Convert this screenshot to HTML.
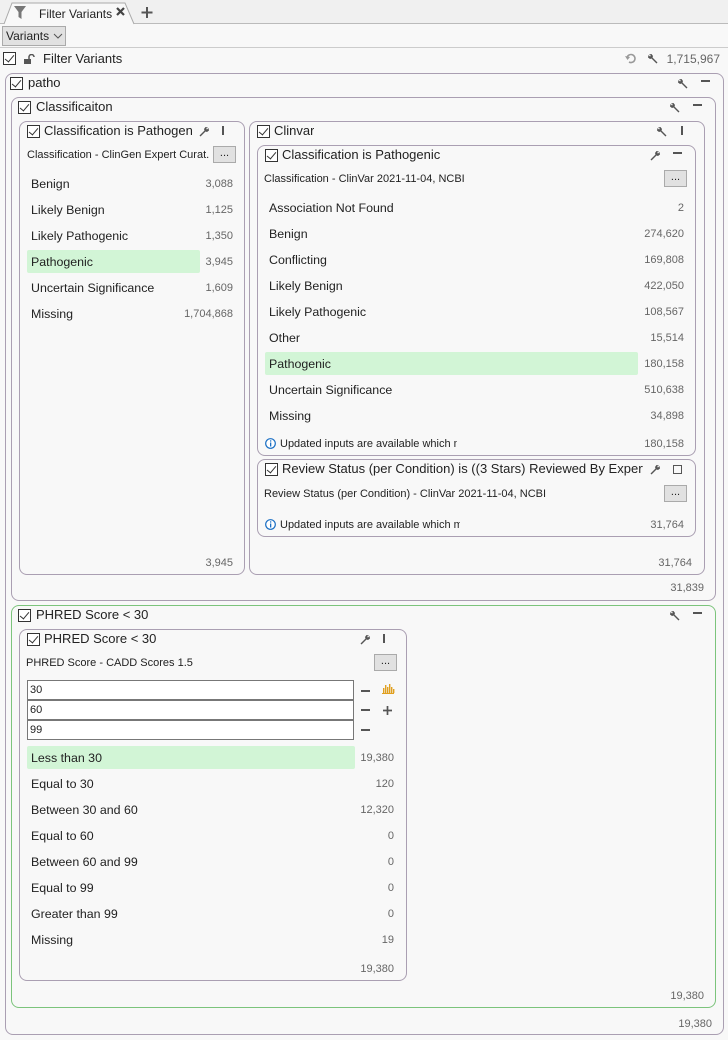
<!DOCTYPE html>
<html><head><meta charset="utf-8"><style>
*{box-sizing:border-box;margin:0;padding:0}
body{width:728px;height:1040px;background:#f8f8f8;font-family:"Liberation Sans",Tahoma,sans-serif;font-size:12.4px;color:#222;position:relative;overflow:hidden}
.a{position:absolute}
.box{position:absolute;border:1px solid #aa9fb2;border-radius:8px}
.t{position:absolute;height:16px;line-height:16px;white-space:nowrap;overflow:hidden}
.h{font-size:13px}
.c{position:absolute;height:16px;line-height:16px;font-size:11px;color:#666;text-align:right;white-space:nowrap}
.cb{position:absolute;width:13px;height:13px;border:1px solid #333;background:#fff}
.cb::after{content:"";position:absolute;left:3px;top:0px;width:4px;height:8px;border:solid #333;border-width:0 1.5px 1.5px 0;transform:rotate(40deg)}
.btn{position:absolute;width:23px;height:17px;border:1px solid #aaa;background:#e1e1e1;font-size:11px;text-align:center;line-height:13px;color:#222}
.hl{position:absolute;background:#d2f5d6;border-radius:2px}
.min{position:absolute;width:9px;height:2px;background:#555}
.bar{position:absolute;width:2px;height:9px;background:#555}
.inp{position:absolute;border:1px solid #777;background:#fff;height:20px;line-height:18px;padding-left:2px;font-size:11px}
.sm{font-size:11px}
</style></head><body>
<svg width="0" height="0" style="position:absolute"><defs>
<symbol id="w" viewBox="0 0 12 12"><path d="M2 1.5 L4.5 1 L6 3 L5.5 4.5 L10.5 9.5 L9.5 10.5 L4.5 5.5 L3 6 L1 4.5 L1.5 2 L3 3.5 L4 2.8 Z" fill="#555"/></symbol>
<symbol id="w2" viewBox="0 0 12 12"><path d="M10 1.5 L7.5 1 L6 3 L6.5 4.5 L1.5 9.5 L2.5 10.5 L7.5 5.5 L9 6 L11 4.5 L10.5 2 L9 3.5 L8 2.8 Z" fill="#555"/></symbol>
</defs></svg>

<div class="a" style="left:0;top:0;width:728px;height:24px;background:#f0f0f0;border-bottom:1px solid #bbb"></div>
<svg class="a" style="left:0;top:0" width="160" height="25"><path d="M4 24 L12 3 L125 3 L134 24" fill="#f8f8f8" stroke="#aaa"/><path d="M14 6 L26 6 L21.5 12 L21.5 19 L18.5 17 L18.5 12 Z" fill="#777"/><path d="M117 8 L124 15 M124 8 L117 15" stroke="#444" stroke-width="2.2"/><path d="M147 7 V18 M141.5 12.5 H152.5" stroke="#555" stroke-width="2"/></svg>
<div class="t" style="left:39px;top:6px;font-size:12px">Filter Variants</div>
<div class="a" style="left:2px;top:26px;width:64px;height:20px;background:#e1e1e1;border:1px solid #aaa"></div>
<div class="t" style="left:6px;top:28px;font-size:12px">Variants</div>
<svg class="a" style="left:53px;top:33px" width="10" height="6"><path d="M1 1 L5 5 L9 1" stroke="#555" fill="none"/></svg>
<div class="a" style="left:0;top:47px;width:728px;height:1px;background:#ccc"></div>

<div class="cb" style="left:3px;top:52px"></div>
<svg class="a" style="left:23px;top:54px" width="12" height="11"><rect x="1" y="5" width="7" height="5" fill="#555"/><path d="M6 5 V3 a2.5 2.5 0 0 1 5 0" stroke="#555" fill="none" stroke-width="1.5"/></svg>
<div class="t h" style="left:43px;top:51px">Filter Variants</div>
<svg class="a" style="left:624px;top:52px" width="13" height="13"><path d="M3 6 a4 4 0 1 1 2 4" stroke="#999" fill="none" stroke-width="1.6"/><path d="M1 4 L3.5 8 L6 5 Z" fill="#999"/></svg>
<svg class="a" style="left:647px;top:53px" width="12" height="12"><use href="#w"/></svg>
<div class="c" style="left:660px;top:51px;width:60px;font-size:12px">1,715,967</div>

<div class="box" style="left:5px;top:73px;width:719px;height:962px"></div>
<div class="cb" style="left:10px;top:77px"></div>
<div class="t h" style="left:28px;top:75px">patho</div>
<svg class="a" style="left:677px;top:78px" width="12" height="12"><use href="#w"/></svg>
<div class="min" style="left:701px;top:80px"></div>
<div class="c" style="left:640px;top:1016px;width:72px">19,380</div>

<div class="box" style="left:11px;top:97px;width:705px;height:504px"></div>
<div class="cb" style="left:18px;top:101px"></div>
<div class="t h" style="left:36px;top:99px">Classificaiton</div>
<svg class="a" style="left:669px;top:102px" width="12" height="12"><use href="#w"/></svg>
<div class="min" style="left:693px;top:104px"></div>
<div class="c" style="left:630px;top:580px;width:74px">31,839</div>

<div class="box" style="left:19px;top:121px;width:226px;height:454px"></div>
<div class="cb" style="left:27px;top:125px"></div>
<div class="t h" style="left:44px;top:123px;width:148px">Classification is Pathogeni</div>
<svg class="a" style="left:198px;top:126px" width="12" height="12"><use href="#w2"/></svg>
<div class="bar" style="left:222px;top:126px"></div>
<div class="t sm" style="left:27px;top:147px;width:183px">Classification - ClinGen Expert Curat...</div>
<div class="btn" style="left:213px;top:146px">...</div>
<div class="hl" style="left:27px;top:250px;width:173px;height:23px"></div>
<div class="t" style="left:31px;top:176px">Benign</div><div class="c" style="left:160px;top:176px;width:73px">3,088</div>
<div class="t" style="left:31px;top:202px">Likely Benign</div><div class="c" style="left:160px;top:202px;width:73px">1,125</div>
<div class="t" style="left:31px;top:228px">Likely Pathogenic</div><div class="c" style="left:160px;top:228px;width:73px">1,350</div>
<div class="t" style="left:31px;top:254px">Pathogenic</div><div class="c" style="left:160px;top:254px;width:73px">3,945</div>
<div class="t" style="left:31px;top:280px">Uncertain Significance</div><div class="c" style="left:160px;top:280px;width:73px">1,609</div>
<div class="t" style="left:31px;top:306px">Missing</div><div class="c" style="left:160px;top:306px;width:73px">1,704,868</div>
<div class="c" style="left:160px;top:555px;width:73px">3,945</div>

<div class="box" style="left:249px;top:121px;width:456px;height:454px"></div>
<div class="cb" style="left:257px;top:125px"></div>
<div class="t h" style="left:274px;top:123px">Clinvar</div>
<svg class="a" style="left:656px;top:126px" width="12" height="12"><use href="#w"/></svg>
<div class="bar" style="left:681px;top:126px"></div>
<div class="c" style="left:620px;top:555px;width:72px">31,764</div>

<div class="box" style="left:257px;top:145px;width:439px;height:311px"></div>
<div class="cb" style="left:265px;top:149px"></div>
<div class="t h" style="left:282px;top:147px">Classification is Pathogenic</div>
<svg class="a" style="left:649px;top:150px" width="12" height="12"><use href="#w2"/></svg>
<div class="min" style="left:673px;top:152px"></div>
<div class="t sm" style="left:264px;top:171px">Classification - ClinVar 2021-11-04, NCBI</div>
<div class="btn" style="left:664px;top:170px">...</div>
<div class="hl" style="left:265px;top:352px;width:373px;height:23px"></div>
<div class="t" style="left:269px;top:200px">Association Not Found</div><div class="c" style="left:600px;top:200px;width:84px">2</div>
<div class="t" style="left:269px;top:226px">Benign</div><div class="c" style="left:600px;top:226px;width:84px">274,620</div>
<div class="t" style="left:269px;top:252px">Conflicting</div><div class="c" style="left:600px;top:252px;width:84px">169,808</div>
<div class="t" style="left:269px;top:278px">Likely Benign</div><div class="c" style="left:600px;top:278px;width:84px">422,050</div>
<div class="t" style="left:269px;top:304px">Likely Pathogenic</div><div class="c" style="left:600px;top:304px;width:84px">108,567</div>
<div class="t" style="left:269px;top:330px">Other</div><div class="c" style="left:600px;top:330px;width:84px">15,514</div>
<div class="t" style="left:269px;top:356px">Pathogenic</div><div class="c" style="left:600px;top:356px;width:84px">180,158</div>
<div class="t" style="left:269px;top:382px">Uncertain Significance</div><div class="c" style="left:600px;top:382px;width:84px">510,638</div>
<div class="t" style="left:269px;top:408px">Missing</div><div class="c" style="left:600px;top:408px;width:84px">34,898</div>
<svg class="a" style="left:265px;top:438px" width="11" height="11"><circle cx="5.5" cy="5.5" r="4.8" fill="#fff" stroke="#1a6fc4" stroke-width="1.2"/><rect x="5" y="4.5" width="1.3" height="4" fill="#1a6fc4"/><rect x="5" y="2.3" width="1.3" height="1.3" fill="#1a6fc4"/></svg>
<div class="t sm" style="left:280px;top:436px;width:177px">Updated inputs are available which may</div>
<div class="c" style="left:600px;top:436px;width:84px">180,158</div>

<div class="box" style="left:257px;top:459px;width:439px;height:78px"></div>
<div class="cb" style="left:265px;top:463px"></div>
<div class="t h" style="left:282px;top:461px;width:361px">Review Status (per Condition) is ((3 Stars) Reviewed By Expert Panel</div>
<svg class="a" style="left:649px;top:464px" width="12" height="12"><use href="#w2"/></svg>
<div class="a" style="left:673px;top:465px;width:9px;height:9px;border:1.5px solid #555"></div>
<div class="t sm" style="left:264px;top:486px">Review Status (per Condition) - ClinVar 2021-11-04, NCBI</div>
<div class="btn" style="left:664px;top:485px">...</div>
<svg class="a" style="left:265px;top:519px" width="11" height="11"><circle cx="5.5" cy="5.5" r="4.8" fill="#fff" stroke="#1a6fc4" stroke-width="1.2"/><rect x="5" y="4.5" width="1.3" height="4" fill="#1a6fc4"/><rect x="5" y="2.3" width="1.3" height="1.3" fill="#1a6fc4"/></svg>
<div class="t sm" style="left:280px;top:517px;width:180px">Updated inputs are available which may</div>
<div class="c" style="left:600px;top:517px;width:84px">31,764</div>

<div class="box" style="left:11px;top:605px;width:705px;height:403px;border-color:#7cc47c"></div>
<div class="cb" style="left:18px;top:609px"></div>
<div class="t h" style="left:36px;top:607px">PHRED Score &lt; 30</div>
<svg class="a" style="left:669px;top:610px" width="12" height="12"><use href="#w"/></svg>
<div class="min" style="left:693px;top:612px"></div>
<div class="c" style="left:630px;top:988px;width:74px">19,380</div>

<div class="box" style="left:19px;top:629px;width:388px;height:352px"></div>
<div class="cb" style="left:27px;top:633px"></div>
<div class="t h" style="left:44px;top:631px">PHRED Score &lt; 30</div>
<svg class="a" style="left:359px;top:634px" width="12" height="12"><use href="#w2"/></svg>
<div class="bar" style="left:383px;top:634px"></div>
<div class="t sm" style="left:26px;top:655px">PHRED Score - CADD Scores 1.5</div>
<div class="btn" style="left:374px;top:654px">...</div>
<div class="inp" style="left:27px;top:680px;width:327px">30</div>
<div class="inp" style="left:27px;top:700px;width:327px">60</div>
<div class="inp" style="left:27px;top:720px;width:327px">99</div>
<div class="min" style="left:361px;top:690px"></div>
<div class="min" style="left:361px;top:709px"></div>
<div class="min" style="left:361px;top:729px"></div>
<svg class="a" style="left:381px;top:683px" width="14" height="11"><path d="M1 10.5 H13" stroke="#e0a020"/><rect x="2" y="5" width="1.4" height="5" fill="#e0a020"/><rect x="4" y="2" width="1.4" height="8" fill="#e0a020"/><rect x="6" y="4" width="1.4" height="6" fill="#e0a020"/><rect x="8" y="1" width="1.4" height="9" fill="#e0a020"/><rect x="10" y="4" width="1.4" height="6" fill="#e0a020"/><rect x="12" y="6" width="1.4" height="4" fill="#e0a020"/></svg>
<svg class="a" style="left:382px;top:705px" width="11" height="11"><path d="M5.5 1 V10 M1 5.5 H10" stroke="#555" stroke-width="1.7"/></svg>
<div class="hl" style="left:27px;top:746px;width:328px;height:23px"></div>
<div class="t" style="left:31px;top:750px">Less than 30</div><div class="c" style="left:320px;top:750px;width:74px">19,380</div>
<div class="t" style="left:31px;top:776px">Equal to 30</div><div class="c" style="left:320px;top:776px;width:74px">120</div>
<div class="t" style="left:31px;top:802px">Between 30 and 60</div><div class="c" style="left:320px;top:802px;width:74px">12,320</div>
<div class="t" style="left:31px;top:828px">Equal to 60</div><div class="c" style="left:320px;top:828px;width:74px">0</div>
<div class="t" style="left:31px;top:854px">Between 60 and 99</div><div class="c" style="left:320px;top:854px;width:74px">0</div>
<div class="t" style="left:31px;top:880px">Equal to 99</div><div class="c" style="left:320px;top:880px;width:74px">0</div>
<div class="t" style="left:31px;top:906px">Greater than 99</div><div class="c" style="left:320px;top:906px;width:74px">0</div>
<div class="t" style="left:31px;top:932px">Missing</div><div class="c" style="left:320px;top:932px;width:74px">19</div>
<div class="c" style="left:320px;top:961px;width:74px">19,380</div>
</body></html>
